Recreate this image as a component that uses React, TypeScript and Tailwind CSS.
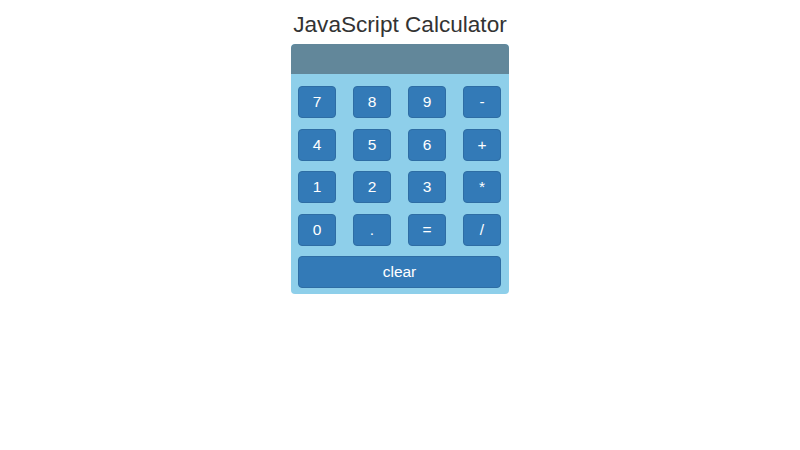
import React from "react";

const keys = ["7", "8", "9", "-", "4", "5", "6", "+", "1", "2", "3", "*", "0", ".", "=", "/"];

function Key({ label, wide }: { label: string; wide?: boolean }) {
  return (
    <button
      className={`${wide ? "col-span-4" : ""} h-[32px] rounded-[4px] border border-[#2e6da4] bg-[#337ab7] text-[15.5px] leading-none text-white`}
    >
      {label}
    </button>
  );
}

export default function App() {
  return (
    <div
      className="flex min-h-[450px] w-full flex-col items-center bg-white"
      style={{ fontFamily: '"Liberation Sans", Arial, sans-serif' }}
    >
      <h1 className="mt-[10px] h-[30px] text-[22.6px] font-normal leading-[30px] text-[#333333]">
        JavaScript Calculator
      </h1>
      <div className="mt-[4px] w-[218px] overflow-hidden rounded-[4px] bg-[#8ecfea]">
        <div className="h-[30px] rounded-t-[4px] bg-[#62879a]" />
        <div className="grid grid-cols-[repeat(4,38px)] gap-x-[17px] gap-y-[10.5px] pb-[6px] pl-[7px] pr-[8px] pt-[12px]">
          {keys.map((k) => (
            <Key key={k} label={k} />
          ))}
          <Key label="clear" wide />
        </div>
      </div>
    </div>
  );
}
